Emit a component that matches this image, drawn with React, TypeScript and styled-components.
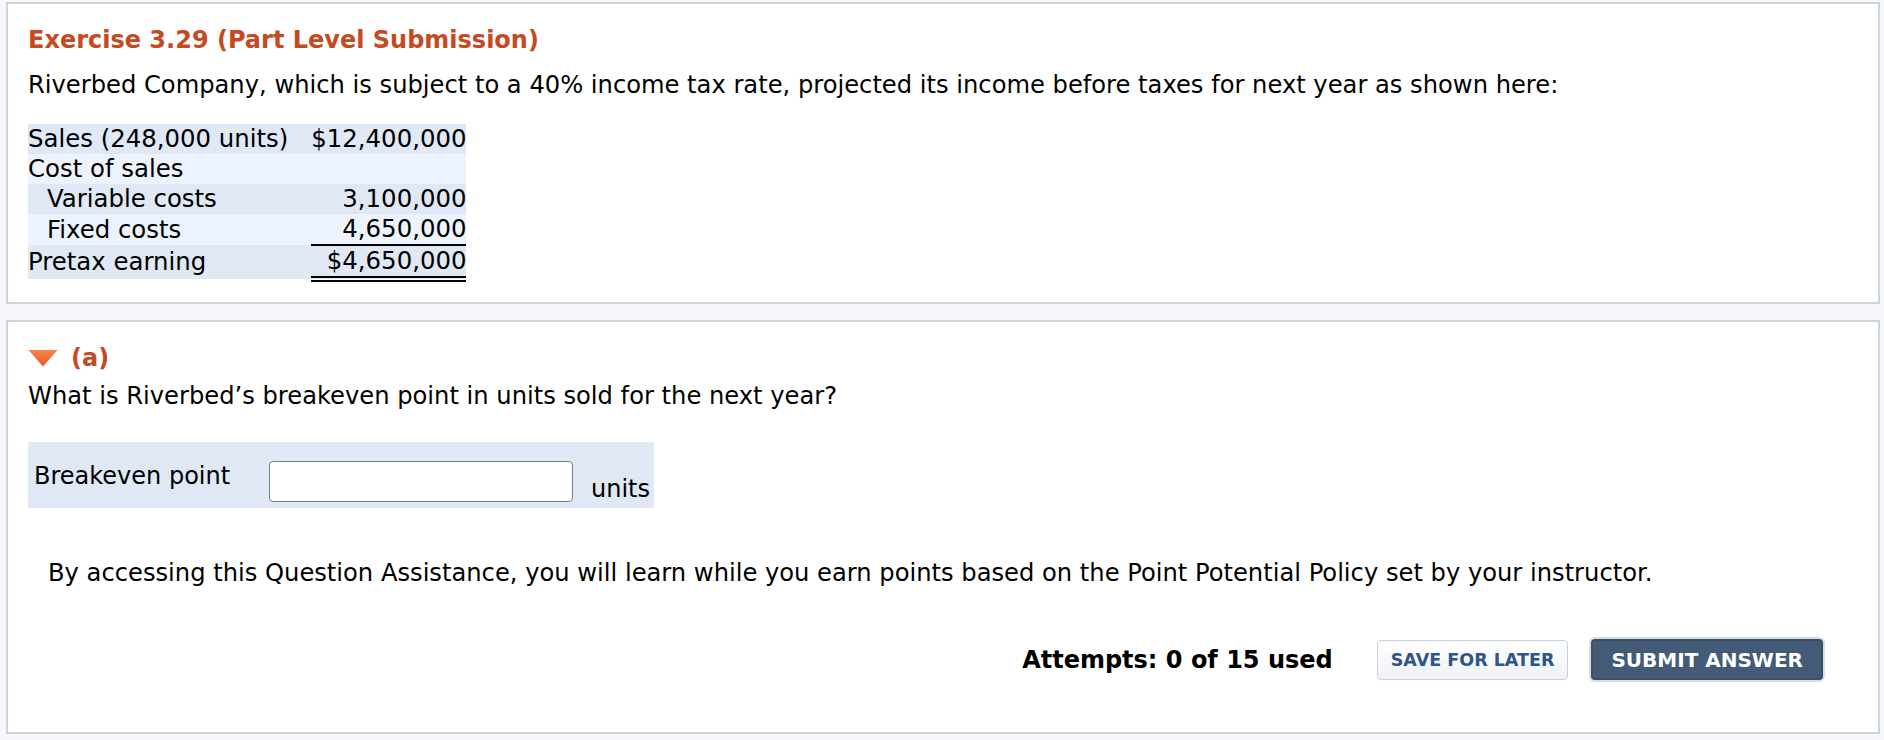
import React from "react";
import styled, { createGlobalStyle } from "styled-components";

const GlobalStyle = createGlobalStyle`
  body {
    margin: 0;
    background: #f5f7fa;
    font-family: "DejaVu Sans", Verdana, sans-serif;
    color: #000;
  }
`;

const Page = styled.div`
  display: flex;
  flex-direction: column;
  gap: 16px;
  padding: 2px 4px 0 6px;
`;

const Panel = styled.section`
  background: #fff;
  border: 2px solid #cdd4de;
  padding: ${(p) => p.$pad};
`;

const Title = styled.h1`
  margin: 0;
  font-size: 24px;
  line-height: 28px;
  font-weight: bold;
  color: #c64a1f;
`;

const Text = styled.p`
  margin: ${(p) => p.$margin || "0"};
  font-size: 24.2px;
  line-height: 28px;
`;

const Sheet = styled.table`
  border-collapse: collapse;
  margin-top: 25px;
  font-size: 24.4px;
`;

const Row = styled.tr`
  background: ${(p) => (p.$dark ? "#dfe8f4" : "#edf3fc")};
`;

const Label = styled.td`
  height: 30px;
  padding: 0 23px 0 ${(p) => (p.$indent ? "19px" : "0")};
  line-height: 28px;
  white-space: nowrap;
`;

const Amount = styled.td`
  height: 30px;
  padding: 0;
  line-height: 28px;
  text-align: right;
  white-space: nowrap;
  border-bottom: ${(p) =>
    p.$rule === "single" ? "2px solid #000" : p.$rule === "double" ? "6px double #000" : "none"};
`;

const PartHead = styled.div`
  display: flex;
  align-items: center;
  gap: 13px;
  height: 28px;
`;

const Caret = styled.span`
  width: 30px;
  height: 17px;
  background: linear-gradient(#f6854a, #e8561d);
  clip-path: polygon(0 0, 100% 0, 50% 100%);
`;

const PartName = styled.span`
  font-size: 24px;
  font-weight: bold;
  color: #c64a1f;
`;

const AnswerBand = styled.div`
  display: inline-flex;
  align-items: flex-start;
  margin-top: 32px;
  height: 66px;
  padding: 0 4px 0 6px;
  background: #dfe8f4;
`;

const FieldLabel = styled.span`
  font-size: 24px;
  line-height: 28px;
  margin-top: 20px;
  width: 235px;
`;

const Field = styled.input`
  box-sizing: border-box;
  width: 304px;
  height: 41px;
  margin-top: 19px;
  border: 1.5px solid #7d7d7d;
  border-radius: 4px;
  background: #fff;
  outline: none;
`;

const Unit = styled.span`
  font-size: 24px;
  line-height: 28px;
  margin: 33px 0 0 18px;
`;

const Footer = styled.div`
  display: flex;
  justify-content: flex-end;
  align-items: center;
  height: 43px;
  margin: 51px 35px 0 0;
`;

const Attempts = styled.span`
  font-size: 24px;
  font-weight: bold;
  margin-right: 44px;
`;

const Button = styled.button`
  box-sizing: border-box;
  font-family: "DejaVu Sans", Verdana, sans-serif;
  font-weight: bold;
  border-radius: 4px;
  cursor: pointer;
  white-space: nowrap;
  font-size: ${(p) => (p.$primary ? "20px" : "17.5px")};
  height: ${(p) => (p.$primary ? "41px" : "40px")};
  padding: ${(p) => (p.$primary ? "0 18px" : "0 13px")};
  color: ${(p) => (p.$primary ? "#fff" : "#2e548c")};
  background: ${(p) => (p.$primary ? "#435b76" : "linear-gradient(#ffffff, #eef1f5)")};
  border: ${(p) => (p.$primary ? "2px solid #3a5069" : "1px solid #c8d0da")};
  box-shadow: ${(p) => (p.$primary ? "0 0 0 2px #d6dce4" : "none")};
  margin-left: ${(p) => (p.$primary ? "23px" : "0")};
`;

const rows = [
  { label: "Sales (248,000 units)", value: "$12,400,000", dark: true },
  { label: "Cost of sales", value: "", dark: false },
  { label: "Variable costs", value: "3,100,000", dark: true, indent: true },
  { label: "Fixed costs", value: "4,650,000", dark: false, indent: true, rule: "single" },
  { label: "Pretax earning", value: "$4,650,000", dark: true, rule: "double" },
];

export default function App() {
  return (
    <>
      <GlobalStyle />
      <Page>
        <Panel $pad="22px 20px 20px 20px">
          <Title>Exercise 3.29 (Part Level Submission)</Title>
          <Text $margin="17px 0 0">
            Riverbed Company, which is subject to a 40% income tax rate, projected its income before taxes for next year as shown here:
          </Text>
          <Sheet>
            <tbody>
              {rows.map((r) => (
                <Row key={r.label} $dark={r.dark}>
                  <Label $indent={r.indent}>{r.label}</Label>
                  <Amount $rule={r.rule}>{r.value}</Amount>
                </Row>
              ))}
            </tbody>
          </Sheet>
        </Panel>
        <Panel $pad="22px 20px 51px 20px">
          <PartHead>
            <Caret />
            <PartName>(a)</PartName>
          </PartHead>
          <Text $margin="10px 0 0">What is Riverbed’s breakeven point in units sold for the next year?</Text>
          <AnswerBand>
            <FieldLabel>Breakeven point</FieldLabel>
            <Field type="text" />
            <Unit>units</Unit>
          </AnswerBand>
          <Text $margin="51px 0 0 20px">
            By accessing this Question Assistance, you will learn while you earn points based on the Point Potential Policy set by your instructor.
          </Text>
          <Footer>
            <Attempts>Attempts: 0 of 15 used</Attempts>
            <Button>SAVE FOR LATER</Button>
            <Button $primary>SUBMIT ANSWER</Button>
          </Footer>
        </Panel>
      </Page>
    </>
  );
}
